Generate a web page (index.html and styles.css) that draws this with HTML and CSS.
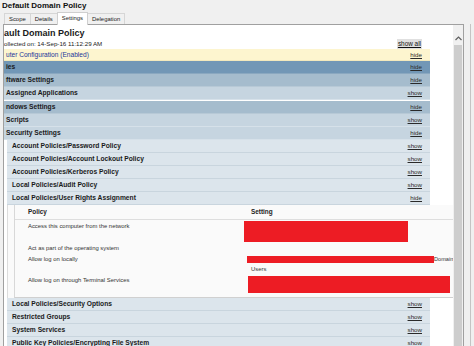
FILE: index.html
```html
<!DOCTYPE html>
<html>
<head>
<meta charset="utf-8">
<link rel="stylesheet" href="styles.css">
</head>
<body>
<div class="window">
  <div class="title">Default Domain Policy</div>
  <div class="tabs">
    <div class="tab">Scope</div>
    <div class="tab">Details</div>
    <div class="tab active">Settings</div>
    <div class="tab">Delegation</div>
  </div>
  <div class="main">
    <div class="panel">
      <div class="report">
        <div class="rtitle">ault Domain Policy</div>
        <div class="collected"><span>ollected on: 14-Sep-16 11:12:29 AM</span><span class="link all">show all</span></div>
        <div class="row l0"><span>uter Configuration (Enabled)</span><span class="link">hide</span></div>
        <div class="row l1"><span>ies</span><span class="link">hide</span></div>
        <div class="row l2"><span>ftware Settings</span><span class="link">hide</span></div>
        <div class="row l3 last"><span>Assigned Applications</span><span class="link">show</span></div>
        <div class="row l2"><span>ndows Settings</span><span class="link">hide</span></div>
        <div class="row l3"><span>Scripts</span><span class="link">show</span></div>
        <div class="row l3"><span>Security Settings</span><span class="link">hide</span></div>
        <div class="row l4"><span>Account Policies/Password Policy</span><span class="link">show</span></div>
        <div class="row l4"><span>Account Policies/Account Lockout Policy</span><span class="link">show</span></div>
        <div class="row l4"><span>Account Policies/Kerberos Policy</span><span class="link">show</span></div>
        <div class="row l4"><span>Local Policies/Audit Policy</span><span class="link">show</span></div>
        <div class="row l4"><span>Local Policies/User Rights Assignment</span><span class="link">hide</span></div>
        <div class="tablewrap">
          <div class="table">
            <div class="th">Policy</div>
            <div class="th set">Setting</div>
            <div class="td r1">Access this computer from the network</div>
            <div class="td r1 sv"><div class="red red1"></div></div>
            <div class="td r2">Act as part of the operating system</div>
            <div class="td r2 sv"></div>
            <div class="td r3">Allow log on locally</div>
            <div class="td r3 sv"><div class="line"><div class="red red2"></div><span>Domain</span></div><div class="users">Users</div></div>
            <div class="td r4">Allow log on through Terminal Services</div>
            <div class="td r4 sv"><div class="red red3"></div></div>
          </div>
        </div>
        <div class="row l4"><span>Local Policies/Security Options</span><span class="link">show</span></div>
        <div class="row l4"><span>Restricted Groups</span><span class="link">show</span></div>
        <div class="row l4"><span>System Services</span><span class="link">show</span></div>
        <div class="row l4"><span>Public Key Policies/Encrypting File System</span><span class="link">show</span></div>
      </div>
      <div class="scrollbar">
        <svg class="arrow" width="7" height="5" viewBox="0 0 7 5"><path d="M0.5 4 L3.5 1 L6.5 4" fill="none" stroke="#606060" stroke-width="1.2"/></svg>
        <div class="thumb"></div>
      </div>
    </div>
    <div class="edge"></div>
  </div>
</div>
</body>
</html>
```
FILE: styles.css
```css
html, body {
  margin: 0;
  padding: 0;
  background: #f0f0f0;
  font-family: "Liberation Sans", Arial, sans-serif;
  color: #1a1a1a;
}
.window {
  width: 474px;
  height: 346px;
  overflow: hidden;
  display: flex;
  flex-direction: column;
}
.title {
  height: 12px;
  line-height: 12px;
  font-size: 8px;
  font-weight: bold;
  padding-left: 2px;
  color: #111;
}
.tabs {
  height: 12px;
  display: flex;
  align-items: flex-end;
  padding-left: 4px;
}
.tab {
  height: 10px;
  line-height: 10px;
  font-size: 5.9px;
  padding: 0 4px;
  border: 1px solid #d6d6d6;
  border-bottom: none;
  background: #f0f0f0;
  color: #222;
  margin-right: -1px;
}
.tab.active {
  height: 12px;
  line-height: 11px;
  background: #fff;
  border-color: #cfcfcf;
  position: relative;
  z-index: 1;
  margin-bottom: -1px;
}
.main {
  flex: 1;
  display: flex;
  min-height: 0;
}
.panel {
  margin-left: 3px;
  width: 459px;
  border: 1px solid #a0a0a0;
  border-bottom: none;
  background: #fff;
  display: flex;
  min-height: 0;
  overflow: hidden;
}
.report {
  width: 449px;
  background: #fff;
  overflow: hidden;
}
.rtitle {
  height: 14px;
  line-height: 16px;
  font-size: 9px;
  font-weight: bold;
  color: #1a1a1a;
}
.collected {
  height: 10px;
  line-height: 10px;
  font-size: 6.2px;
  display: flex;
  justify-content: space-between;
  padding-right: 31px;
  color: #222;
}
.link {
  font-size: 6.2px;
  font-weight: normal;
  text-decoration: underline;
  color: #2a2a2a;
}
.link.all {
  background: #e0e0e0;
  color: #111;
  padding: 0 1px;
  font-size: 6.4px;
}
.row {
  height: 12px;
  line-height: 12px;
  font-size: 6.7px;
  font-weight: bold;
  display: flex;
  justify-content: space-between;
  padding: 0 8px 0 2px;
  margin-right: 23px;
  border-bottom: 1px solid #e3eaf0;
}
.row.l0 {
  background: #fdf5cf;
  color: #23369a;
  font-weight: normal;
  font-size: 6.6px;
  height: 11px;
  line-height: 11px;
  border-bottom: 1px solid #f3e9bd;
}
.row.l1 {
  background: #7297b6;
  border-bottom-color: #8aa8c0;
}
.row.l2 {
  background: #a5bccd;
  border-bottom-color: #b7c9d6;
}
.row.l3 {
  background: #c6d5e0;
  border-bottom-color: #d6e1e9;
}
.row.l3.last {
  border-bottom: 1px solid #d6e1e9;
  margin-bottom: 1px;
}
.row.l4 {
  background: #dce5ec;
  margin-left: 3px;
  padding-left: 5px;
  border-bottom-color: #c9d5de;
}
.tablewrap {
  margin-left: 3px;
  border-left: 1px solid #dcdcdc;
  background: #fafafa;
  height: 93px;
  padding-left: 6px;
}
.table {
  height: 92px;
  border-left: 1px solid #d8d8d8;
  border-bottom: 1px solid #d0d0d0;
  background: #fafafa;
  display: grid;
  grid-template-columns: 229px 1fr;
  grid-template-rows: 15px 23px 10px 22px 22px;
  font-size: 5.9px;
  color: #333;
}
.th {
  font-weight: bold;
  font-size: 6.4px;
  color: #222;
  padding-left: 13px;
  line-height: 14px;
  border-bottom: 1px solid #dedede;
}
.th.set {
  padding-left: 7px;
}
.td {
  padding-left: 13px;
  line-height: 10px;
  padding-top: 1px;
}
.td.r2 {
  padding-top: 0;
}
.td.r3 {
  padding-top: 1px;
}
.td.r4 {
  padding-top: 0;
}
.td.sv {
  padding-left: 0;
}
.red {
  background: #ed1c24;
}
.red1 {
  width: 164px;
  height: 21px;
}
.line {
  display: flex;
  align-items: center;
  height: 10px;
  white-space: nowrap;
}
.red2 {
  width: 187px;
  height: 7px;
  margin-left: 3px;
  flex: none;
}
.line span {
  font-size: 5.6px;
}
.users {
  padding-left: 7px;
  line-height: 10px;
}
.red3 {
  width: 202px;
  height: 17px;
  margin-left: 4px;
  margin-top: 1px;
}
.scrollbar {
  width: 10px;
  background: #f0f0f0;
  display: flex;
  flex-direction: column;
  align-items: center;
  padding-top: 11px;
}
.arrow {
  display: block;
}
.thumb {
  margin-top: 4px;
  width: 8px;
  flex: 1;
  background: #cdcdcd;
}
.edge {
  width: 6px;
  border-right: 1px solid #c4c4c4;
  background: #f0f0f0;
}
```
